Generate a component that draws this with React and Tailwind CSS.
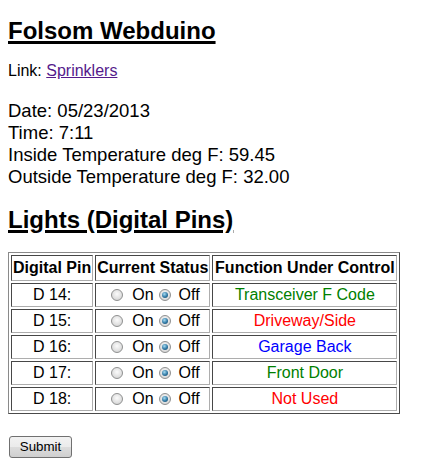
import React from "react";

const pins = [
  { pin: "D 14:", label: "Transceiver F Code", color: "text-[#008000]" },
  { pin: "D 15:", label: "Driveway/Side", color: "text-[#ff0000]" },
  { pin: "D 16:", label: "Garage Back", color: "text-[#0000ff]" },
  { pin: "D 17:", label: "Front Door", color: "text-[#008000]" },
  { pin: "D 18:", label: "Not Used", color: "text-[#ff0000]" },
];

const cell =
  "border border-solid border-t-[#474747] border-l-[#474747] border-b-[#adadad] border-r-[#adadad] px-[1px] py-0 text-center align-middle whitespace-nowrap";

const Radio = ({ checked }) => (
  <span className="inline-flex h-[12px] w-[12px] shrink-0 items-center justify-center rounded-full border border-[#8f9090] bg-[radial-gradient(circle_at_50%_40%,#fbfbfb,#e2e2e2_55%,#c9c9c9)]">
    {checked && (
      <span className="h-[6px] w-[6px] rounded-full bg-[radial-gradient(circle_at_40%_35%,#a6dcf2,#2f77a3_55%,#184660)]" />
    )}
  </span>
);

const App = () => {
  return (
    <div className="min-h-screen bg-white pl-2 pt-[17px] font-['Liberation_Sans',Arial,sans-serif] text-black">
      <h1 className="text-[24px] font-bold leading-[28px] underline decoration-[3px] underline-offset-[2px]">
        Folsom Webduino
      </h1>

      <p className="mt-[17px] text-[16px] leading-[18px]">
        Link: <a className="text-[#551a8b] underline">Sprinklers</a>
      </p>

      <div className="mt-[20px] text-[18.5px] leading-[22px]">
        <div>Date: 05/23/2013</div>
        <div>Time: 7:11</div>
        <div>Inside Temperature deg F: 59.45</div>
        <div>Outside Temperature deg F: 32.00</div>
      </div>

      <h2 className="mt-[18px] text-[24px] font-bold leading-[28px] underline decoration-[3px] underline-offset-[2px]">
        Lights (Digital Pins)
      </h2>

      <table className="mt-[18px] border-separate border-spacing-[2px] border border-solid border-t-[#8a8a8a] border-l-[#8a8a8a] border-b-[#4a4a4a] border-r-[#4a4a4a] text-[16px] leading-[18px]">
        <thead>
          <tr className="h-[26px]">
            <th className={`${cell} w-[82px] font-bold`}>Digital Pin</th>
            <th className={`${cell} w-[115px] font-bold`}>Current Status</th>
            <th className={`${cell} w-[185px] font-bold`}>Function Under Control</th>
          </tr>
        </thead>
        <tbody>
          {pins.map((p) => (
            <tr key={p.pin} className="h-[24px]">
              <td className={cell}>{p.pin}</td>
              <td className={cell}>
                <div className="flex items-center">
                  <span className="ml-[14px] flex">
                    <Radio />
                  </span>
                  <span className="ml-[9px]">On</span>
                  <span className="ml-[5px] flex">
                    <Radio checked />
                  </span>
                  <span className="ml-[8px]">Off</span>
                </div>
              </td>
              <td className={`${cell} ${p.color}`}>{p.label}</td>
            </tr>
          ))}
        </tbody>
      </table>

      <button
        type="button"
        className="mt-[22px] ml-[1px] h-[22px] w-[63px] rounded-[3px] border border-[#707070] bg-[linear-gradient(#f2f2f2,#ebebeb_50%,#dddddd_50%,#cfcfcf)] text-[13.33px] leading-[20px] text-black"
      >
        Submit
      </button>
    </div>
  );
};

export default App;
